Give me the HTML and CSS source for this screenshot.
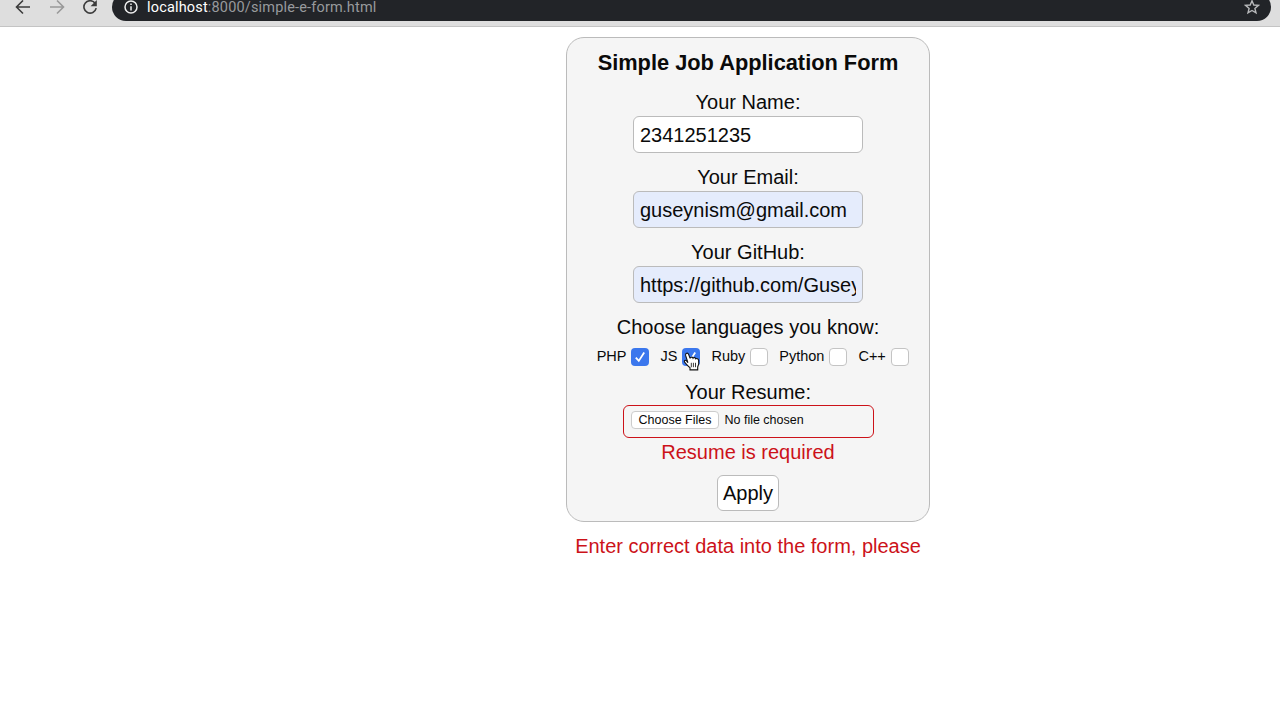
FILE: index.html
```html
<!DOCTYPE html>
<html lang="en">
<head>
  <meta charset="UTF-8">
  <meta name="viewport" content="width=device-width, initial-scale=1.0">
  <title>Simple Job Application Form</title>
  <link rel="stylesheet" href="styles.css">
</head>
<body>
  <div class="toolbar">
    <svg class="nav-icon" viewBox="0 0 16 16"><path d="M15 8H1.8M8 1.5L1.5 8L8 14.5"/></svg>
    <svg class="nav-icon disabled" viewBox="0 0 16 16"><path d="M1 8h13.2M8 1.5L14.5 8L8 14.5"/></svg>
    <svg class="nav-icon" viewBox="0 0 16 16"><path d="M13.1 4.2A6.2 6.2 0 1 0 14.2 9.2"/><path class="solid" d="M14.8 1v6.2H8.6z"/></svg>
    <div class="address">
      <svg class="info" viewBox="0 0 14 14"><circle cx="7" cy="7" r="6"/><path d="M7 6.2v4.2M7 3.5v1.5"/></svg>
      <div class="url"><span class="host">localhost</span>:8000/simple-e-form.html</div>
      <svg class="star" viewBox="0 0 16 16"><path d="M8 1.8l1.8 4.2 4.6.4-3.5 3 1.1 4.5L8 11.5l-4 2.4 1.1-4.5-3.5-3 4.6-.4z"/></svg>
    </div>
  </div>

  <div class="container">
    <form class="form" novalidate>
      <h1 class="title">Simple Job Application Form</h1>

      <div class="field">
        <label for="name">Your Name:</label>
        <input class="text-input" type="text" id="name" value="2341251235">
      </div>
      <div class="field">
        <label for="email">Your Email:</label>
        <input class="text-input filled" type="email" id="email" value="guseynism@gmail.com">
      </div>
      <div class="field">
        <label for="github">Your GitHub:</label>
        <input class="text-input filled" type="text" id="github" value="https://github.com/Guseynism">
      </div>

      <div class="languages-title">Choose languages you know:</div>
      <div class="languages">
        <label class="language">PHP <span class="check checked"><svg viewBox="0 0 18 18"><path d="M4.8 9.6l3 3.3 5.4-8.4"/></svg></span></label>
        <label class="language">JS <span class="check checked"><svg viewBox="0 0 18 18"><path d="M4.8 9.6l3 3.3 5.4-8.4"/></svg>
          <svg class="cursor" viewBox="0 0 17 19"><path class="hand" d="M4.9 10.6L2.6 3.4C2.1 1.2 4.8.3 5.6 2.4l1.5 4C7.3 4.9 9.5 4.7 10 6.2c.6-1 2.4-.8 2.8.6 1.1-.7 2.6 0 2.8 1.4.4 2.5.2 4.8-.9 6.7v3H7v-2.2c-1.9-1.6-3.5-3.5-5.2-5.3C.5 8.6 2.4 7.5 3.6 9z"/><path class="lines" d="M8.3 10.8v4.4M10.4 10.8v4.4M12.5 10.8v4.4"/></svg></span></label>
        <label class="language">Ruby <span class="check"></span></label>
        <label class="language">Python <span class="check"></span></label>
        <label class="language">C++ <span class="check"></span></label>
      </div>

      <div class="resume">
        <div>Your Resume:</div>
        <div class="file-input">
          <button class="file-btn" type="button">Choose Files</button>
          <span>No file chosen</span>
        </div>
        <div class="error">Resume is required</div>
      </div>

      <button class="apply-btn" type="submit">Apply</button>
    </form>
    <div class="error form-error">Enter correct data into the form, please</div>
  </div>
</body>
</html>
```

FILE: styles.css
```css
* {
  box-sizing: border-box;
}
body {
  margin: 0;
  background: white;
  color: #0a0a0a;
  font-family: "Liberation Sans", Arial, sans-serif;
  font-size: 20px;
  line-height: 24px;
}

/* browser bar */
.toolbar {
  display: flex;
  align-items: flex-end;
  height: 27px;
  padding: 0 9px 5px 15px;
  background: #dedede;
  border-bottom: 1px solid #c4c4c4;
  overflow: hidden;
}
.nav-icon {
  flex: none;
  width: 16px;
  height: 16px;
  margin: 0 17.5px 6px 0;
  fill: none;
  stroke: #3c3c3c;
  stroke-width: 1.6;
}
.nav-icon .solid {
  fill: #3c3c3c;
  stroke: none;
}
.nav-icon.disabled {
  stroke: #999;
}
.address {
  flex: 1;
  display: flex;
  align-items: center;
  height: 28px;
  margin-left: -4px;
  padding: 0 11px 0 12px;
  border-radius: 14px;
  background: #222428;
}
.info {
  width: 14px;
  height: 14px;
  margin-right: 9.5px;
  fill: none;
  stroke: #eee;
  stroke-width: 1.5;
}
.url {
  flex: 1;
  padding-top: 1px;
  font-family: Roboto, sans-serif;
  font-size: 14.5px;
  line-height: 14px;
  letter-spacing: 0.17px;
  color: #989a9d;
}
.host {
  color: #fff;
}
.star {
  width: 16px;
  height: 16px;
  fill: none;
  stroke: #b8b9bb;
  stroke-width: 1.4;
}

/* form */
.container {
  width: 364px;
  margin: 10px 0 0 566px;
  text-align: center;
}
.form {
  display: flex;
  flex-direction: column;
  align-items: center;
  height: 485px;
  padding-top: 12px;
  border: 1px solid #bbb;
  border-radius: 18px;
  background: #f5f5f5;
}
.title {
  margin: 0 0 14px;
  font-size: 21.8px;
  line-height: 26px;
}
.field {
  display: flex;
  flex-direction: column;
  align-items: center;
  gap: 2px;
  height: 75px;
}
.text-input {
  width: 230px;
  height: 37px;
  padding: 1px 6px 0;
  border: 1px solid #bbb;
  border-radius: 6px;
  background: white;
  color: #0a0a0a;
  font: inherit;
  outline: none;
}
.text-input.filled {
  background: #e5ecfc;
}
.languages {
  display: flex;
  gap: 11px;
  height: 41px;
  padding: 9px 0 0 9.5px;
  font-size: 14.5px;
  line-height: 17px;
}
.language {
  display: flex;
  gap: 5px;
}
.check {
  position: relative;
  width: 18px;
  height: 18px;
  border: 1px solid #c4c4c4;
  border-radius: 4px;
  background: white;
}
.check.checked {
  border: none;
  background: #3b77ed;
}
.check svg {
  display: block;
  fill: none;
  stroke: white;
  stroke-width: 1.8;
}
.check .cursor {
  position: absolute;
  left: 1px;
  top: 4px;
  width: 17px;
  height: 19px;
}
.cursor .hand {
  fill: white;
  stroke: #111;
  stroke-width: 1.1;
}
.cursor .lines {
  stroke: #222;
  stroke-width: 0.9;
}
.resume {
  display: flex;
  flex-direction: column;
  align-items: center;
}
.file-input {
  display: flex;
  align-items: center;
  gap: 5px;
  width: 251px;
  height: 33px;
  margin: 1px 0 2px;
  padding: 0 7px 3px;
  border: 1px solid #cc1219;
  border-radius: 6px;
  font-size: 12.5px;
}
.file-btn {
  height: 18px;
  padding: 0 7px;
  border: 1px solid #ccc;
  border-radius: 4px;
  background: white;
  color: #0a0a0a;
  font: inherit;
  line-height: 16px;
}
.error {
  color: #cc1219;
}
.apply-btn {
  width: 62px;
  height: 36px;
  margin-top: 11px;
  padding: 0;
  border: 1px solid #bbb;
  border-radius: 6px;
  background: white;
  color: #0a0a0a;
  font: inherit;
}
.form-error {
  margin-top: 12px;
  white-space: nowrap;
}
```
